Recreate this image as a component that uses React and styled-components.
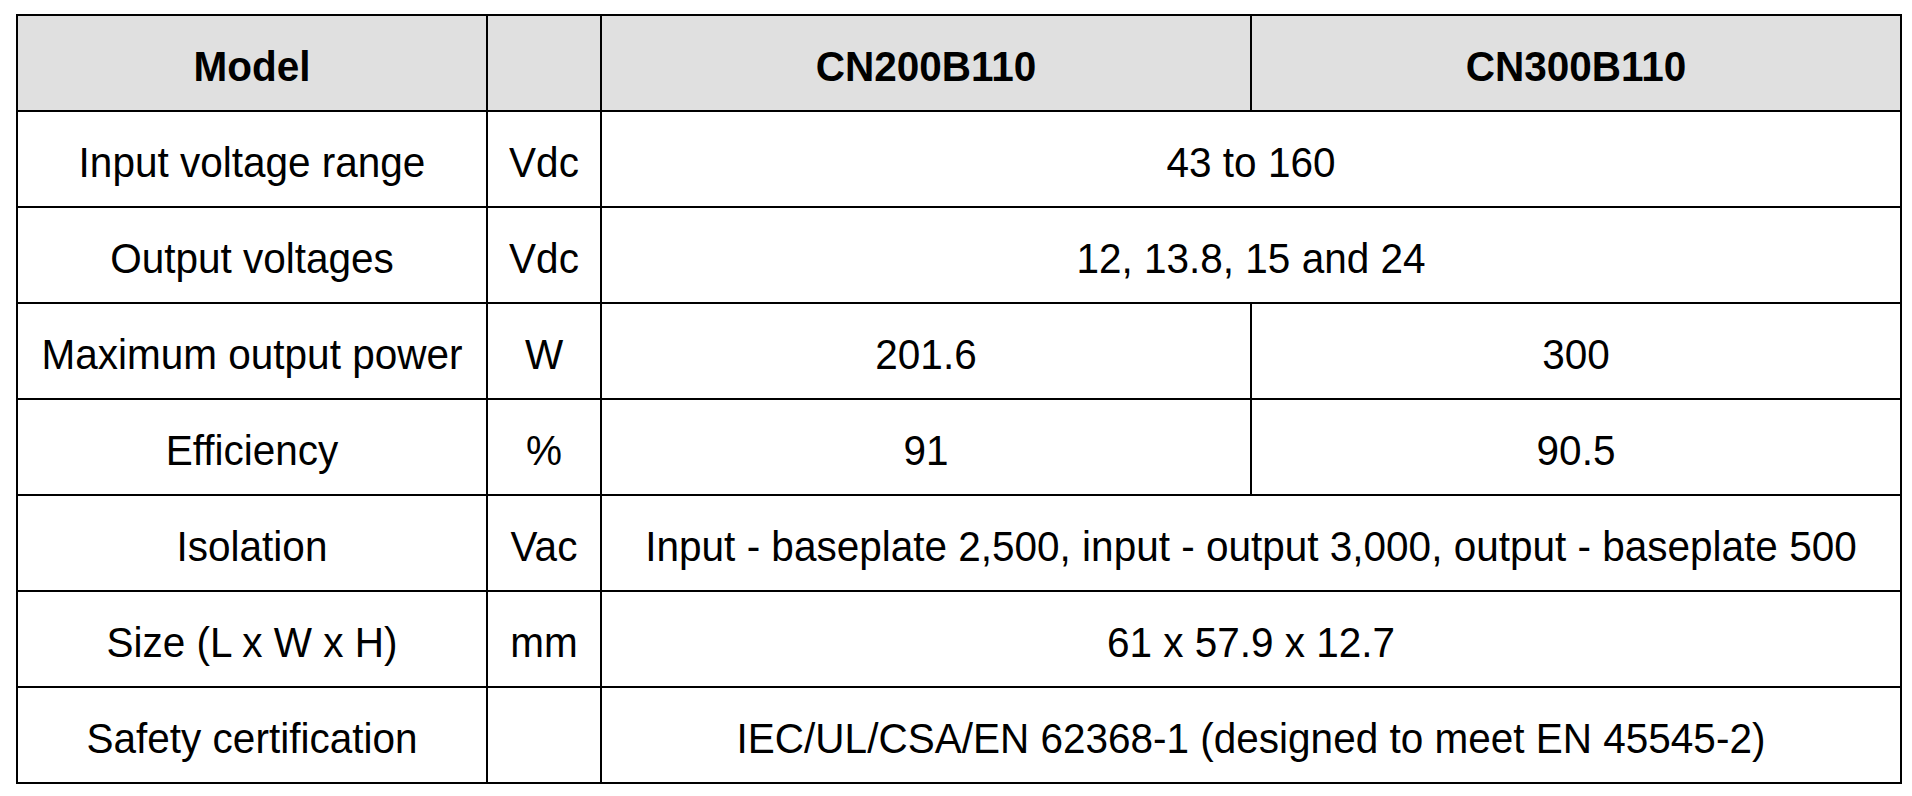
import React from "react";
import styled, { createGlobalStyle } from "styled-components";

const GlobalStyle = createGlobalStyle`
  html, body {
    margin: 0;
    padding: 0;
    background: #ffffff;
  }
  body {
    font-family: "Liberation Sans", Arial, sans-serif;
    color: #000000;
  }
`;

const Page = styled.div`
  padding: 14px 12px 0 16px;
`;

const Table = styled.table`
  width: 1884px;
  border-collapse: collapse;
  table-layout: fixed;
  border: 2.5px solid #000;
`;

const Col = styled.col`
  width: ${props => props.w}px;
`;

const Row = styled.tr`
  height: 96px;
  background: ${props => (props.head ? "#e0e0e0" : "#ffffff")};
`;

const Cell = styled.td`
  border: 2px solid #000;
  padding: 6px 4px 0;
  text-align: center;
  vertical-align: middle;
  font-size: 40.5px;
  font-weight: ${props => (props.bold ? 700 : 400)};
  line-height: 1.1;
  white-space: nowrap;
`;

const Text = styled.span`
  display: inline-block;
  transform: scaleY(1.05);
`;

const rows = [
  { label: "Input voltage range", unit: "Vdc", values: ["43 to 160"] },
  { label: "Output voltages", unit: "Vdc", values: ["12, 13.8, 15 and 24"] },
  { label: "Maximum output power", unit: "W", values: ["201.6", "300"] },
  { label: "Efficiency", unit: "%", values: ["91", "90.5"] },
  {
    label: "Isolation",
    unit: "Vac",
    values: ["Input - baseplate 2,500, input - output 3,000, output - baseplate 500"]
  },
  { label: "Size (L x W x H)", unit: "mm", values: ["61 x 57.9 x 12.7"] },
  {
    label: "Safety certification",
    unit: "",
    values: ["IEC/UL/CSA/EN 62368-1 (designed to meet EN 45545-2)"]
  }
];

const App = () => (
  <>
    <GlobalStyle />
    <Page>
      <Table>
        <colgroup>
          <Col w={470} />
          <Col w={114} />
          <Col w={650} />
          <Col w={650} />
        </colgroup>
        <thead>
          <Row head>
            <Cell as="th" bold><Text>Model</Text></Cell>
            <Cell as="th" />
            <Cell as="th" bold><Text>CN200B110</Text></Cell>
            <Cell as="th" bold><Text>CN300B110</Text></Cell>
          </Row>
        </thead>
        <tbody>
          {rows.map(row => (
            <Row key={row.label}>
              <Cell><Text>{row.label}</Text></Cell>
              <Cell><Text>{row.unit}</Text></Cell>
              {row.values.length === 1 ? (
                <Cell colSpan={2}><Text>{row.values[0]}</Text></Cell>
              ) : (
                row.values.map(v => (
                  <Cell key={v}><Text>{v}</Text></Cell>
                ))
              )}
            </Row>
          ))}
        </tbody>
      </Table>
    </Page>
  </>
);

export default App;
